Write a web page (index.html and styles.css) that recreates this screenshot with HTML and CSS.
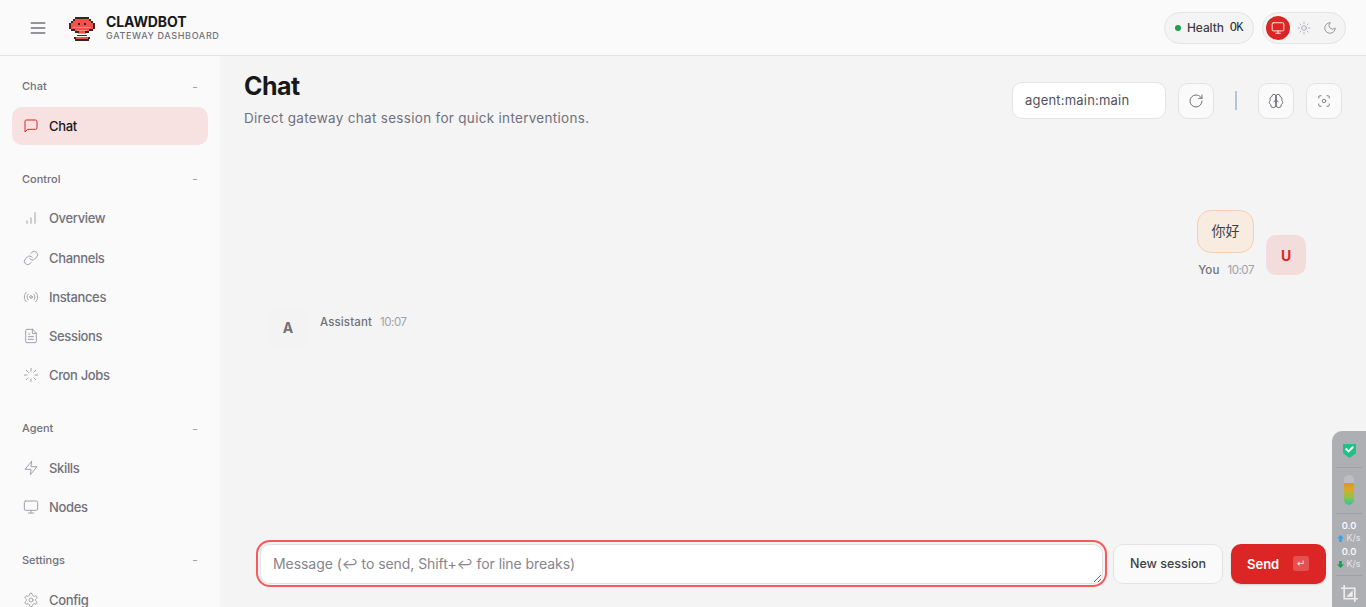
FILE: index.html
```html
<!DOCTYPE html>
<html lang="en">
<head>
<meta charset="utf-8">
<title>Clawdbot Gateway Dashboard</title>
<link rel="stylesheet" href="styles.css">
</head>
<body>
<header class="topbar">
  <div class="brand-side">
    <button class="menu-btn" aria-label="Menu">
      <svg class="ico-20" viewBox="0 0 24 24"><path d="M4 6h16M4 12h16M4 18h16"/></svg>
    </button>
    <svg class="logo" viewBox="0 0 26 24" shape-rendering="crispEdges">
      <path class="px-dark" d="M6 0h14v2H6zM4 2h2v2H4zM20 2h2v2h-2zM2 4h2v2H2zM22 4h2v2h-2zM0 6h2v6H0zM24 6h2v6h-2zM2 12h4v2H2zM20 12h4v2h-4zM6 14h4v2H6zM16 14h4v2h-4zM8 18h10v1H8zM5 20h2v2H5zM19 20h2v2h-2zM6 22h14v2H6z"/>
      <path class="px-red" d="M6 2h14v2H6zM4 4h18v2H4zM2 6h22v6H2zM6 12h14v2H6zM10 14h6v2h-6zM7 20h12v2H7z"/>
      <path class="px-dark" d="M9 6h2v2H9zM15 6h2v2h-2z"/>
      <path class="px-light" d="M4 10h18v1H4zM8 13h10v1H8zM9 16h8v1H9z"/>
    </svg>
    <div class="brand-text">
      <div class="brand-name">CLAWDBOT</div>
      <div class="brand-sub">GATEWAY DASHBOARD</div>
    </div>
  </div>
  <div class="top-right">
    <div class="pill health"><span class="dot"></span><span class="health-label">Health</span><span class="health-val">OK</span></div>
    <div class="pill theme">
      <span class="theme-btn active"><svg class="ico-14" viewBox="0 0 24 24"><rect x="2" y="3" width="20" height="14" rx="2"/><path d="M8 21h8M12 17v4"/></svg></span>
      <span class="theme-btn"><svg class="ico-14" viewBox="0 0 24 24"><circle cx="12" cy="12" r="4"/><path d="M12 2v2M12 20v2M4.93 4.93l1.41 1.41M17.66 17.66l1.41 1.41M2 12h2M20 12h2M6.34 17.66l-1.41 1.41M19.07 4.93l-1.41 1.41"/></svg></span>
      <span class="theme-btn"><svg class="ico-14" viewBox="0 0 24 24"><path d="M12 3a6 6 0 0 0 9 9 9 9 0 1 1-9-9Z"/></svg></span>
    </div>
  </div>
</header>

<div class="shell">
  <nav class="sidebar">
    <section class="group">
      <div class="group-label"><span>Chat</span><span class="minus">−</span></div>
      <a class="item active"><svg class="ico-16" viewBox="0 0 24 24"><path d="M21 15a2 2 0 0 1-2 2H7l-4 4V5a2 2 0 0 1 2-2h14a2 2 0 0 1 2 2z"/></svg>Chat</a>
    </section>
    <section class="group">
      <div class="group-label"><span>Control</span><span class="minus">−</span></div>
      <a class="item"><svg class="ico-16" viewBox="0 0 24 24"><path d="M12 20v-8M18 20V4M6 20v-4"/></svg>Overview</a>
      <a class="item"><svg class="ico-16" viewBox="0 0 24 24"><path d="M10 13a5 5 0 0 0 7.54.54l3-3a5 5 0 0 0-7.07-7.07l-1.72 1.71"/><path d="M14 11a5 5 0 0 0-7.54-.54l-3 3a5 5 0 0 0 7.07 7.07l1.71-1.71"/></svg>Channels</a>
      <a class="item"><svg class="ico-16" viewBox="0 0 24 24"><path d="M4.9 19.1C1 15.2 1 8.8 4.9 4.9"/><path d="M7.8 16.2c-2.3-2.3-2.3-6.1 0-8.5"/><circle cx="12" cy="12" r="2"/><path d="M16.2 7.8c2.3 2.3 2.3 6.1 0 8.5"/><path d="M19.1 4.9C23 8.8 23 15.1 19.1 19"/></svg>Instances</a>
      <a class="item"><svg class="ico-16" viewBox="0 0 24 24"><path d="M14.5 2H6a2 2 0 0 0-2 2v16a2 2 0 0 0 2 2h12a2 2 0 0 0 2-2V7.5L14.5 2z"/><path d="M14 2v6h6M16 13H8M16 17H8M10 9H8"/></svg>Sessions</a>
      <a class="item"><svg class="ico-16" viewBox="0 0 24 24"><path d="M12 2v4M12 18v4M4.93 4.93l2.83 2.83M16.24 16.24l2.83 2.83M2 12h4M18 12h4M4.93 19.07l2.83-2.83M16.24 7.76l2.83-2.83"/></svg>Cron Jobs</a>
    </section>
    <section class="group">
      <div class="group-label"><span>Agent</span><span class="minus">−</span></div>
      <a class="item"><svg class="ico-16" viewBox="0 0 24 24"><path d="M13 2 3 14h9l-1 8 10-12h-9l1-8z"/></svg>Skills</a>
      <a class="item"><svg class="ico-16" viewBox="0 0 24 24"><rect x="2" y="3" width="20" height="14" rx="2"/><path d="M8 21h8M12 17v4"/></svg>Nodes</a>
    </section>
    <section class="group">
      <div class="group-label"><span>Settings</span><span class="minus">−</span></div>
      <a class="item"><svg class="ico-16" viewBox="0 0 24 24"><path d="M12.22 2h-.44a2 2 0 0 0-2 2v.18a2 2 0 0 1-1 1.73l-.43.25a2 2 0 0 1-2 0l-.15-.08a2 2 0 0 0-2.73.73l-.22.38a2 2 0 0 0 .73 2.73l.15.1a2 2 0 0 1 1 1.72v.51a2 2 0 0 1-1 1.74l-.15.09a2 2 0 0 0-.73 2.73l.22.38a2 2 0 0 0 2.73.73l.15-.08a2 2 0 0 1 2 0l.43.25a2 2 0 0 1 1 1.73V20a2 2 0 0 0 2 2h.44a2 2 0 0 0 2-2v-.18a2 2 0 0 1 1-1.73l.43-.25a2 2 0 0 1 2 0l.15.08a2 2 0 0 0 2.73-.73l.22-.39a2 2 0 0 0-.73-2.73l-.15-.08a2 2 0 0 1-1-1.74v-.5a2 2 0 0 1 1-1.74l.15-.09a2 2 0 0 0 .73-2.73l-.22-.38a2 2 0 0 0-2.73-.73l-.15.08a2 2 0 0 1-2 0l-.43-.25a2 2 0 0 1-1-1.73V4a2 2 0 0 0-2-2z"/><circle cx="12" cy="12" r="3"/></svg>Config</a>
    </section>
  </nav>

  <main class="main">
    <div class="page-head">
      <div>
        <h1 class="page-title">Chat</h1>
        <p class="page-sub">Direct gateway chat session for quick interventions.</p>
      </div>
      <div class="head-tools">
        <div class="session-select">agent:main:main</div>
        <button class="tool-btn"><svg class="ico-16" viewBox="0 0 24 24"><path d="M21 12a9 9 0 1 1-9-9c2.52 0 4.93 1 6.74 2.74L21 8"/><path d="M21 3v5h-5"/></svg></button>
        <span class="tool-sep"></span>
        <button class="tool-btn"><svg class="ico-16" viewBox="0 0 24 24"><path d="M12 5a3 3 0 1 0-5.997.125 4 4 0 0 0-2.526 5.77 4 4 0 0 0 .556 6.588A4 4 0 1 0 12 18Z"/><path d="M12 5a3 3 0 1 1 5.997.125 4 4 0 0 1 2.526 5.77 4 4 0 0 1-.556 6.588A4 4 0 1 1 12 18Z"/><path d="M15 13a4.5 4.5 0 0 1-3-4 4.5 4.5 0 0 1-3 4"/><path d="M12 5v13"/></svg></button>
        <button class="tool-btn"><svg class="ico-14" viewBox="0 0 24 24"><circle cx="12" cy="12" r="3"/><path d="M3 7V5a2 2 0 0 1 2-2h2M17 3h2a2 2 0 0 1 2 2v2M21 17v2a2 2 0 0 1-2 2h-2M7 21H5a2 2 0 0 1-2-2v-2"/></svg></button>
      </div>
    </div>

    <div class="thread">
      <div class="msg msg-user">
        <div class="msg-body">
          <div class="bubble">你好</div>
          <div class="meta"><span class="who">You</span><span class="time">10:07</span></div>
        </div>
        <div class="avatar avatar-user">U</div>
      </div>
      <div class="msg msg-bot">
        <div class="avatar avatar-bot">A</div>
        <div class="meta"><span class="who">Assistant</span><span class="time">10:07</span></div>
      </div>
    </div>

    <div class="compose">
      <div class="compose-ring">
        <textarea class="compose-input" placeholder="Message (↩ to send, Shift+↩ for line breaks)"></textarea>
      </div>
      <button class="btn-new">New session</button>
      <button class="btn-send">Send<kbd class="kbd">↵</kbd></button>
    </div>
  </main>
</div>

<aside class="widget">
  <svg class="w-shield" viewBox="0 0 14 16"><path class="shield-fill" d="M0 1h14v10l-7 5-7-5z"/><path class="shield-check" d="M3.5 6.5 6 9l4.5-4.5"/></svg>
  <hr class="w-sep">
  <div class="w-gauge"><span class="w-gauge-fill"></span></div>
  <hr class="w-sep">
  <div class="w-speed">
    <div class="w-num">0.0</div>
    <div class="w-unit"><svg class="w-arrow up" viewBox="0 0 8 8"><path d="M4 0 8 4H5.5v4h-3V4H0z"/></svg>K/s</div>
    <div class="w-num">0.0</div>
    <div class="w-unit"><svg class="w-arrow down" viewBox="0 0 8 8"><path d="M4 8 8 4H5.5V0h-3v4H0z"/></svg>K/s</div>
  </div>
  <hr class="w-sep">
  <svg class="w-crop" viewBox="0 0 16 16"><path class="crop-line" d="M3 0v13h13M0 3h13v13"/><path class="crop-fill" d="M11 5v6H5z"/></svg>
</aside>
</body>
</html>
```
FILE: styles.css
```css
* { box-sizing: border-box; }
html, body { margin: 0; height: 607px; overflow: hidden; }
body {
  font-family: Inter, "Noto Sans CJK SC", sans-serif;
  background: #f4f4f4;
  color: #18181b;
  position: relative;
}
svg { fill: none; stroke: currentColor; stroke-width: 2; stroke-linecap: round; stroke-linejoin: round; flex: none; display: block; }
button { font-family: inherit; }
.ico-20 { width: 20px; height: 20px; }
.ico-16 { width: 16px; height: 16px; stroke-width: 1.5; }
.ico-14 { width: 14px; height: 14px; stroke-width: 1.5; }

/* Top bar */
.topbar {
  height: 56px;
  background: #fafafa;
  border-bottom: 1px solid #e4e4e5;
  display: flex;
  align-items: center;
  justify-content: space-between;
  padding: 0 20px 0 18px;
}
.brand-side { display: flex; align-items: center; }
.menu-btn { width: 40px; height: 40px; border: 0; background: none; color: #71717a; display: flex; align-items: center; justify-content: center; padding: 0; }
.logo { width: 26px; height: 24px; margin: 2px 11px 0 11px; stroke: none; }
.px-dark { fill: #3d2320; }
.px-red { fill: #f0524c; }
.px-light { fill: #f98b85; }
.brand-text { display: flex; flex-direction: column; }
.brand-name { font-size: 14px; font-weight: 700; line-height: 15px; letter-spacing: -0.1px; color: #18181b; }
.brand-sub { font-size: 9px; font-weight: 500; line-height: 12px; letter-spacing: 0.65px; color: #71717a; margin-top: 1px; }
.top-right { display: flex; align-items: center; gap: 8px; }
.pill { height: 32px; border-radius: 16px; border: 1px solid #e4e4e5; background: #f4f4f5; display: flex; align-items: center; }
.health { width: 90px; padding-left: 10px; font-size: 12px; font-weight: 500; color: #3f3f46; }
.dot { width: 6px; height: 6px; border-radius: 50%; background: #16a34a; margin-right: 6px; }
.health-label { margin-right: 6px; letter-spacing: -0.1px; }
.health-val { font-family: "Liberation Mono", monospace; font-weight: 400; color: #27272a; letter-spacing: -0.8px; }
.theme { width: 84px; padding: 0 3px; gap: 2px; }
.theme-btn { width: 24px; height: 24px; border-radius: 50%; display: flex; align-items: center; justify-content: center; color: #a1a1aa; }
.theme-btn:last-child { color: #8d8d95; }
.theme-btn.active { background: #dc2626; color: #fff; }

/* Shell */
.shell { display: flex; height: 551px; }
.sidebar { width: 220px; flex: none; background: #fafafa; padding: 18px 12px 0; overflow: hidden; }
.group { display: flex; flex-direction: column; gap: 1.25px; margin-bottom: 21.75px; }
.group-label {
  height: 24px;
  margin-bottom: 7.5px;
  padding: 0 10px;
  display: flex;
  align-items: center;
  justify-content: space-between;
  font-size: 11px;
  font-weight: 500;
  color: #71717a;
}
.minus { color: #a1a1aa; font-size: 9px; }
.item {
  height: 38px;
  flex: none;
  border-radius: 10px;
  display: flex;
  align-items: center;
  gap: 10px;
  padding: 0 11px;
  font-size: 13px;
  font-weight: 500;
  letter-spacing: -0.35px;
  color: #71717a;
}
.item svg { color: #a1a1aa; }
.item.active { background: #f8e1e1; color: #18181b; }
.item.active svg { color: #dc2626; }

/* Main */
.main { flex: 1; min-width: 0; display: flex; flex-direction: column; padding: 0 24px; }
.page-head { display: flex; justify-content: space-between; align-items: flex-start; padding-top: 15px; }
.page-title { margin: 0; font-size: 25px; line-height: 30px; font-weight: 700; letter-spacing: -0.5px; color: #18181b; }
.page-sub { margin: 8px 0 0; font-size: 13.5px; line-height: 18px; letter-spacing: 0.3px; color: #71717a; }
.head-tools { display: flex; align-items: center; gap: 12px; margin-top: 11px; }
.session-select { width: 154px; height: 37px; border: 1px solid #e4e4e5; border-radius: 10px; background: #fff; font-size: 13px; line-height: 35px; letter-spacing: 0.2px; padding-left: 12px; color: #52525b; }
.tool-btn { width: 36px; height: 36px; border: 1px solid #e4e4e5; border-radius: 10px; background: #fafafa; color: #71717a; display: flex; align-items: center; justify-content: center; padding: 0; }
.tool-sep { width: 1.5px; height: 19px; background: #b4c4dc; margin: 0 9.25px; }

.thread { flex: 1; display: flex; flex-direction: column; padding: 83px 36px 0 24px; }
.msg { display: flex; }
.msg-user { justify-content: flex-end; gap: 12px; align-items: flex-start; }
.msg-body { display: flex; flex-direction: column; align-items: flex-end; }
.bubble { width: 57px; height: 43px; text-align: center; border: 1px solid #f6cfb0; border-radius: 14px; background: #f8ebe0; font-size: 14px; line-height: 39px; color: #3f3f46; }
.msg-bot { margin-top: 29px; gap: 12px; align-items: flex-start; }
.meta { display: flex; gap: 8px; font-size: 11.5px; line-height: 16px; align-items: center; }
.msg-user .meta { margin-top: 9px; }
.msg-bot .meta { margin-top: 7px; }
.who { color: #71717a; font-weight: 500; letter-spacing: 0.12px; }
.time { color: #a1a1aa; letter-spacing: -0.45px; }
.avatar { width: 40px; height: 40px; border-radius: 10px; display: flex; align-items: center; justify-content: center; font-size: 14px; font-weight: 700; }
.avatar-user { background: #f3dcdc; color: #dc2626; margin-top: 25px; }
.avatar-bot { background: #f3f3f3; color: #71717a; }

.compose { display: flex; align-items: center; gap: 6px; padding: 0 16px 20px 12px; margin-top: auto; }
.compose-ring { flex: 1; min-width: 0; height: 47px; padding: 1.5px 2px; border: 2px solid #f8595a; border-radius: 14px; }
.compose-input { display: block; width: 100%; height: 40px; margin: 0; padding: 10px 12px; border: 1px solid #e0e0e2; border-radius: 10px; background: #fff; font: 14px/18px Inter, sans-serif; outline: 0; color: #18181b; letter-spacing: -0.06px; }
.compose-input::placeholder { color: #85858d; opacity: 1; }
.btn-new { width: 110px; height: 40px; border: 1px solid #e4e4e5; border-radius: 10px; background: #fafafa; font-size: 12.5px; font-weight: 500; color: #3f3f46; padding: 0; }
.btn-send { width: 95px; height: 40px; margin-left: 2px; border: 0; border-radius: 10px; background: #dc2626; color: #fff; font-size: 13px; font-weight: 600; display: flex; align-items: center; padding: 0 17px 0 16px; justify-content: space-between; box-shadow: 0 1px 2px rgba(0,0,0,.15); }
.kbd { width: 16px; height: 15px; border-radius: 3px; background: rgba(255,255,255,.2); font: 10px/15px "DejaVu Sans", sans-serif; text-align: center; color: rgba(255,255,255,.85); }

/* Floating system monitor */
.widget { position: absolute; right: 0; top: 431px; width: 34px; height: 176px; background: #aeafb3; border-top-left-radius: 10px; display: flex; flex-direction: column; align-items: center; padding-top: 12px; }
.w-sep { width: 26px; margin: 0; border: 0; height: 1px; background: #9fa0a4; flex: none; }
.w-shield { width: 13px; height: 15px; stroke: none; margin-bottom: 9px; }
.shield-fill { fill: #20c185; }
.shield-check { fill: none; stroke: #fff; stroke-width: 2; }
.w-gauge { width: 10px; height: 30px; margin: 7px 0 8px; border-radius: 5px; background: #bdbec1; overflow: hidden; display: flex; align-items: flex-end; flex: none; }
.w-gauge-fill { display: block; width: 100%; height: 22px; background: linear-gradient(#e8941a, #d9a82a 30%, #8fc44a 65%, #34c0a8); }
.w-speed { display: flex; flex-direction: column; align-items: center; padding-top: 6px; height: 61px; flex: none; }
.w-num { font-size: 9.5px; line-height: 12px; color: #fff; font-weight: 500; }
.w-unit { font-size: 9px; line-height: 12px; color: #e6e6e8; display: flex; align-items: center; gap: 2px; margin-bottom: 2px; }
.w-arrow { width: 7px; height: 7px; stroke: none; }
.w-arrow.up { fill: #2aa5f5; }
.w-arrow.down { fill: #12a150; }
.w-crop { width: 17px; height: 17px; margin-top: 9px; stroke: #eeeeef; stroke-width: 1.5; stroke-linecap: butt; stroke-linejoin: miter; }
.crop-line { fill: none; }
.crop-fill { fill: #eeeeef; stroke: none; }
```
